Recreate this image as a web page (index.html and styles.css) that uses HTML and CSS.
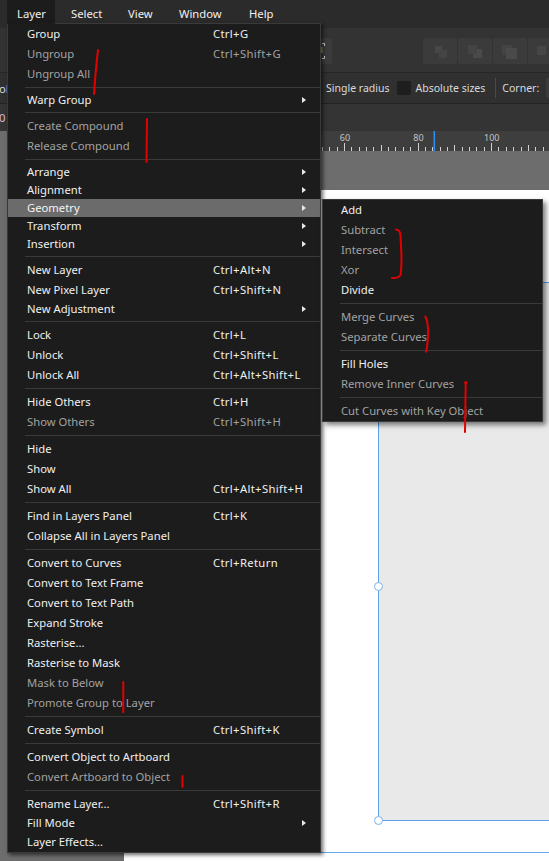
FILE: index.html
```html
<!DOCTYPE html>
<html>
<head>
<meta charset="utf-8">
<link rel="stylesheet" href="styles.css">
</head>
<body>
<div class="app">
  <div class="menubar">
    <div class="mb-item active w-layer">Layer</div>
    <div class="mb-item w-select">Select</div>
    <div class="mb-item w-view">View</div>
    <div class="mb-item w-window">Window</div>
    <div class="mb-item">Help</div>
  </div>

  <div class="toolbar">
    <div class="tb-stub">
      <svg width="40" height="26" viewBox="0 0 40 26">
        <path d="M30 5.5H32.5V8" fill="none" stroke="#cfcfcf" stroke-width="1"/>
        <path d="M32.5 18V20.5H30" fill="none" stroke="#cfcfcf" stroke-width="1"/>
        <rect x="29" y="9" width="1.5" height="6" fill="#8a9a24"/>
      </svg>
    </div>
    <div class="tb-group">
      <div class="tb-btn">
        <svg width="34" height="26" viewBox="0 0 34 26">
          <rect x="12" y="8" width="7" height="7" fill="#474747"/>
          <rect x="16" y="12" width="8" height="8" fill="#444"/>
        </svg>
      </div>
      <div class="tb-btn">
        <svg width="34" height="26" viewBox="0 0 34 26">
          <rect x="10" y="7" width="9" height="9" fill="#444"/>
          <path d="M19 11H24V20H15V16H19Z" fill="#4a4a4a"/>
        </svg>
      </div>
      <div class="tb-btn">
        <svg width="34" height="26" viewBox="0 0 34 26">
          <rect x="9" y="7" width="10" height="10" fill="#444"/>
          <rect x="13" y="10" width="11" height="11" fill="#4a4a4a"/>
        </svg>
      </div>
      <div class="tb-btn">
        <svg width="34" height="26" viewBox="0 0 34 26">
          <rect x="9" y="8" width="9" height="9" fill="#464646"/>
        </svg>
      </div>
    </div>
  </div>

  <div class="contextbar">
    <span class="cut">ol</span>
    <span class="ctx-text">Single radius</span>
    <span class="chk"></span>
    <span class="ctx-text">Absolute sizes</span>
    <span class="vsep"></span>
    <span class="ctx-text">Corner:</span>
    <span class="cbox"></span>
  </div>

  <div class="tabrow"><span class="cut2">0</span></div>

  <div class="ruler">
    <svg width="549" height="20" viewBox="0 0 549 20">
      <rect x="0" y="0" width="7" height="20" fill="#6d6d6d"/>
      <g stroke="#d0d0d0" stroke-width="1">
        <path d="M322.5 16V20M329.5 16V20M337.5 16V20M344.5 12V20M351.5 16V20M359.5 16V20M366.5 16V20M373.5 16V20M381.5 14V20M388.5 16V20M395.5 16V20M403.5 16V20M410.5 16V20M418.5 12V20M425.5 16V20M432.5 16V20M440.5 16V20M447.5 16V20M454.5 14V20M462.5 16V20M469.5 16V20M476.5 16V20M484.5 16V20M491.5 12V20M498.5 16V20M506.5 16V20M513.5 16V20M521.5 16V20M528.5 14V20M535.5 16V20M543.5 16V20"/>
      </g>
      <g class="rnum" fill="#c4c4c4">
        <text x="345" y="9.5" text-anchor="middle">60</text>
        <text x="418.5" y="9.5" text-anchor="middle">80</text>
        <text x="491.8" y="9.5" text-anchor="middle">100</text>
      </g>
      <rect x="433.5" y="0" width="1.6" height="20" fill="#2b8df2"/>
    </svg>
  </div>

  <div class="canvas">
    <div class="artboard">
      <div class="guide"></div>
      <div class="selrect"></div>
      <div class="handle h-mid"></div>
      <div class="handle h-bot"></div>
    </div>
  </div>

  <div class="menu">
    <div class="mi"><span class="lbl">Group</span><span class="sc">Ctrl+G</span></div>
    <div class="mi dis"><span class="lbl">Ungroup</span><span class="sc">Ctrl+Shift+G</span></div>
    <div class="mi dis"><span class="lbl">Ungroup All</span></div>
    <div class="sep"></div>
    <div class="mi sub"><span class="lbl">Warp Group</span><span class="arr"></span></div>
    <div class="sep"></div>
    <div class="mi dis"><span class="lbl">Create Compound</span></div>
    <div class="mi dis"><span class="lbl">Release Compound</span></div>
    <div class="sep"></div>
    <div class="mi sub"><span class="lbl">Arrange</span><span class="arr"></span></div>
    <div class="mi sub"><span class="lbl">Alignment</span><span class="arr"></span></div>
    <div class="mi sub hl"><span class="lbl">Geometry</span><span class="arr"></span></div>
    <div class="mi sub"><span class="lbl">Transform</span><span class="arr"></span></div>
    <div class="mi sub"><span class="lbl">Insertion</span><span class="arr"></span></div>
    <div class="sep"></div>
    <div class="mi"><span class="lbl">New Layer</span><span class="sc">Ctrl+Alt+N</span></div>
    <div class="mi"><span class="lbl">New Pixel Layer</span><span class="sc">Ctrl+Shift+N</span></div>
    <div class="mi sub"><span class="lbl">New Adjustment</span><span class="arr"></span></div>
    <div class="sep"></div>
    <div class="mi"><span class="lbl">Lock</span><span class="sc">Ctrl+L</span></div>
    <div class="mi"><span class="lbl">Unlock</span><span class="sc">Ctrl+Shift+L</span></div>
    <div class="mi"><span class="lbl">Unlock All</span><span class="sc">Ctrl+Alt+Shift+L</span></div>
    <div class="sep"></div>
    <div class="mi"><span class="lbl">Hide Others</span><span class="sc">Ctrl+H</span></div>
    <div class="mi dis"><span class="lbl">Show Others</span><span class="sc">Ctrl+Shift+H</span></div>
    <div class="sep"></div>
    <div class="mi"><span class="lbl">Hide</span></div>
    <div class="mi"><span class="lbl">Show</span></div>
    <div class="mi"><span class="lbl">Show All</span><span class="sc">Ctrl+Alt+Shift+H</span></div>
    <div class="sep"></div>
    <div class="mi"><span class="lbl">Find in Layers Panel</span><span class="sc">Ctrl+K</span></div>
    <div class="mi"><span class="lbl">Collapse All in Layers Panel</span></div>
    <div class="sep"></div>
    <div class="mi"><span class="lbl">Convert to Curves</span><span class="sc">Ctrl+Return</span></div>
    <div class="mi"><span class="lbl">Convert to Text Frame</span></div>
    <div class="mi"><span class="lbl">Convert to Text Path</span></div>
    <div class="mi"><span class="lbl">Expand Stroke</span></div>
    <div class="mi"><span class="lbl">Rasterise...</span></div>
    <div class="mi"><span class="lbl">Rasterise to Mask</span></div>
    <div class="mi dis"><span class="lbl">Mask to Below</span></div>
    <div class="mi dis"><span class="lbl">Promote Group to Layer</span></div>
    <div class="sep"></div>
    <div class="mi"><span class="lbl">Create Symbol</span><span class="sc">Ctrl+Shift+K</span></div>
    <div class="sep"></div>
    <div class="mi"><span class="lbl">Convert Object to Artboard</span></div>
    <div class="mi dis"><span class="lbl">Convert Artboard to Object</span></div>
    <div class="sep"></div>
    <div class="mi"><span class="lbl">Rename Layer...</span><span class="sc">Ctrl+Shift+R</span></div>
    <div class="mi sub"><span class="lbl">Fill Mode</span><span class="arr"></span></div>
    <div class="mi"><span class="lbl">Layer Effects...</span></div>
  </div>

  <div class="submenu">
    <div class="mi"><span class="lbl">Add</span></div>
    <div class="mi dis"><span class="lbl">Subtract</span></div>
    <div class="mi dis"><span class="lbl">Intersect</span></div>
    <div class="mi dis"><span class="lbl">Xor</span></div>
    <div class="mi"><span class="lbl">Divide</span></div>
    <div class="sep"></div>
    <div class="mi dis"><span class="lbl">Merge Curves</span></div>
    <div class="mi dis"><span class="lbl">Separate Curves</span></div>
    <div class="sep"></div>
    <div class="mi"><span class="lbl">Fill Holes</span></div>
    <div class="mi dis"><span class="lbl">Remove Inner Curves</span></div>
    <div class="sep"></div>
    <div class="mi dis"><span class="lbl">Cut Curves with Key Object</span></div>
  </div>

  <svg class="ink" width="549" height="861" viewBox="0 0 549 861">
    <g fill="none" stroke="#e40000" stroke-width="2" stroke-linecap="round" stroke-linejoin="round">
      <path d="M98 50C96.5 62 95 80 94 94"/>
      <path d="M147 119L146.5 162"/>
      <path d="M396 229.5Q400.5 230 400.5 236L401.5 256Q401.5 270 400.5 275Q399.5 278 392 278"/>
      <path d="M425.3 316.5Q428 321 428 331Q428 345 426 351.7"/>
      <path d="M465.7 382.5L465 432"/>
      <path d="M123.3 682L123.3 712.3"/>
      <path d="M182.5 776L182.5 787"/>
    </g>
    <circle cx="465.8" cy="382.5" r="1.6" fill="#e40000"/>
  </svg>
</div>
</body>
</html>
```

FILE: styles.css
```css
* { box-sizing: border-box; }
html, body { margin: 0; padding: 0; }
body {
  width: 549px;
  height: 861px;
  overflow: hidden;
  background: #6d6d6d;
  font-family: "Noto Sans", "Open Sans", sans-serif;
  font-size: 11.25px;
  color: #efefef;
}
.app {
  position: relative;
  width: 549px;
  height: 861px;
  display: flex;
  flex-direction: column;
  overflow: hidden;
}

/* menu bar */
.menubar {
  height: 28px;
  flex: none;
  background: #2b2b2b;
  display: flex;
  padding-left: 7px;
}
.mb-item {
  height: 28px;
  line-height: 28px;
  padding-left: 10px;
  color: #f0f0f0;
  white-space: nowrap;
}
.mb-item.active {
  background: linear-gradient(#1c1c1c 0 23px, transparent 23px);
  margin-right: 6px;
}
.w-layer { width: 48px; }
.w-select { width: 57px; }
.w-view { width: 51px; }
.w-window { width: 70px; }

/* toolbar */
.toolbar {
  height: 45px;
  flex: none;
  background: #333333;
  border-bottom: 1px solid #262626;
  display: flex;
  align-items: flex-start;
  padding-top: 10px;
}
.tb-stub {
  margin-left: 292px;
  width: 40px;
  height: 26px;
  background: #3b3b3b;
  border-radius: 2px;
  flex: none;
}
.tb-stub svg, .tb-btn svg { display: block; }
.tb-group {
  margin-left: 91px;
  display: flex;
  gap: 1px;
}
.tb-btn {
  width: 34px;
  height: 26px;
  flex: none;
  background: #3b3b3b;
  border-radius: 2px;
}

/* context bar */
.contextbar {
  height: 31px;
  flex: none;
  background: #303030;
  border-bottom: 1px solid #232323;
  display: flex;
  align-items: center;
  color: #dadada;
  font-size: 10.5px;
  white-space: nowrap;
}
.cut {
  width: 327px;
  flex: none;
  margin-left: -1px;
  padding-right: 1px;
  font-size: 11.25px;
}
.chk {
  width: 14px;
  height: 14px;
  flex: none;
  background: #1e1e1e;
  border-radius: 2px;
  margin: 0 4px 0 8px;
}
.vsep {
  width: 1px;
  height: 20px;
  flex: none;
  background: #4a4a4a;
  margin: 0 6px 0 10px;
}
.cbox {
  width: 30px;
  height: 20px;
  flex: none;
  margin-left: 7px;
  background: #3b3b3b;
  border-radius: 2px;
}

.tabrow {
  height: 27px;
  flex: none;
  background: #343434;
  display: flex;
  align-items: center;
}
.cut2 {
  margin-left: -1px;
  color: #dcb6cf;
}

.ruler {
  height: 20px;
  flex: none;
  background: #3e3e3e;
}
.ruler svg { display: block; }
.rnum {
  font-family: "Noto Sans", sans-serif;
  font-size: 9px;
}

/* canvas */
.canvas {
  flex: 1;
  position: relative;
  background: #6d6d6d;
}
.artboard {
  position: absolute;
  left: 124px;
  top: 39px;
  right: 0;
  bottom: 0;
  background: #ffffff;
}
.guide {
  position: absolute;
  left: 0;
  right: 0;
  top: 662px;
  height: 1px;
  background: #64a8f0;
}
.selrect {
  position: absolute;
  left: 254px;
  top: 92px;
  width: 300px;
  height: 539px;
  background: #e9e9e9;
  border: 1px solid #5a9fe8;
  border-right: none;
}
.handle {
  position: absolute;
  width: 9px;
  height: 9px;
  border-radius: 50%;
  background: #ffffff;
  border: 1.5px solid #7ab4f2;
}
.h-mid { left: 249.5px; top: 391.5px; }
.h-bot { left: 249.5px; top: 625.5px; }

/* menus */
.menu {
  position: absolute;
  left: 7px;
  top: 23px;
  width: 314px;
  background: #1c1c1c;
  border: 1px solid #3a3a3a;
  box-shadow: 2px 2px 4px rgba(0, 0, 0, 0.6);
  z-index: 5;
}
.menu::before {
  content: "";
  position: absolute;
  left: -1px;
  top: -1px;
  width: 48px;
  height: 1px;
  background: #1c1c1c;
}
.submenu {
  position: absolute;
  left: 322px;
  top: 199px;
  width: 221px;
  background: #1c1c1c;
  border: 1px solid #3a3a3a;
  box-shadow: 3px 3px 5px rgba(0, 0, 0, 0.5);
  z-index: 6;
}
.mi {
  display: grid;
  grid-template-columns: 186px 1fr 4px;
  align-items: center;
  height: 20px;
  padding: 0 14px 2px 19px;
  color: #f0f0f0;
  white-space: nowrap;
}
.mi.sub { height: 18px; }
.mi.dis { color: #a2a2a2; }
.mi.hl { background: #6b6b6b; color: #f4f4f4; }
.lbl { grid-column: 1; }
.sc { grid-column: 2; letter-spacing: 0.35px; }
.arr {
  grid-column: 3;
  width: 0;
  height: 0;
  margin-top: 2px;
  border-left: 4px solid #e8e8e8;
  border-top: 3.5px solid transparent;
  border-bottom: 3.5px solid transparent;
}
.sep {
  height: 7px;
  padding-top: 3px;
}
.sep::after {
  content: "";
  display: block;
  height: 1px;
  margin-left: 17px;
  background: #3a3a3a;
}
.submenu .mi {
  grid-template-columns: 1fr;
  padding-left: 18px;
  padding-right: 8px;
}

.ink {
  position: absolute;
  left: 0;
  top: 0;
  z-index: 10;
  pointer-events: none;
}
```
